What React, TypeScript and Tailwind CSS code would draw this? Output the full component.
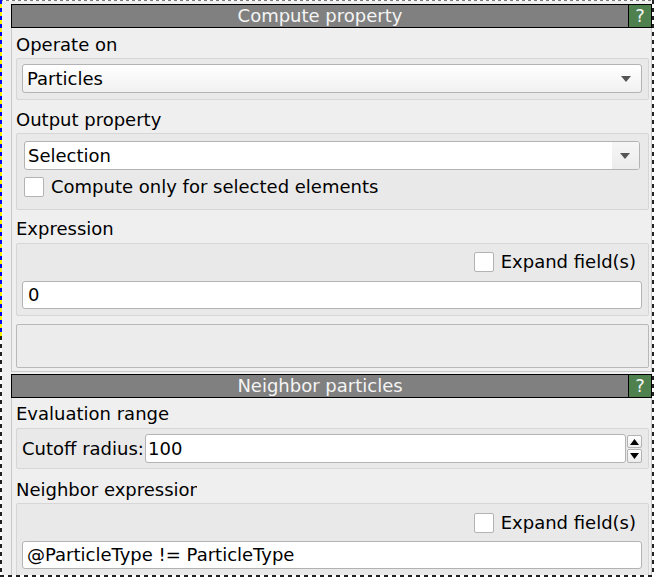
import React from "react";

function Header({ title }: { title: string }) {
  return (
    <div className="flex h-[24px] border border-black bg-[#808080]">
      <div className="flex flex-1 items-center justify-center text-[18px] leading-[20px] text-[#f4f4f4]">{title}</div>
      <div className="flex w-[23px] items-center justify-center border-l border-black bg-[#4e814e] text-[18px] leading-[20px] text-[#f4f4f4]">?</div>
    </div>
  );
}

function Tri({ color = "#555" }: { color?: string }) {
  return (
    <svg width="10" height="6" viewBox="0 0 10 6">
      <polygon points="0,0 10,0 5,6" fill={color} />
    </svg>
  );
}

function Checkbox() {
  return <div className="h-[20px] w-[20px] shrink-0 rounded-[2px] border border-[#b3b3b3] bg-white" />;
}

function Box({ className, children }: { className: string; children?: React.ReactNode }) {
  return <div className={`rounded-[2px] border border-[#d6d6d6] bg-[#e9e9e9] ${className}`}>{children}</div>;
}

export default function App() {
  return (
    <div className="relative h-[577px] w-[654px] overflow-hidden bg-[#efefef] pl-[11px] pr-[2px] pt-[4px] font-['DejaVu_Sans',sans-serif] text-[18px] leading-[20px] text-black">
      <Header title="Compute property" />
      <div className="border-x border-b border-[#c9c9c9] pl-[4px] pr-[2px] pb-[3px]">
        <div className="h-[30px] pt-[7px]">Operate on</div>
        <Box className="h-[42px] pl-[5px] pr-[6px] pt-[5px]">
          <div className="flex h-[29px] items-center rounded-[3px] border border-[#b3b3b3] bg-gradient-to-b from-white to-[#f1f1f1] pl-[4px] pr-[10px]">
            <span className="flex-1">Particles</span>
            <Tri />
          </div>
        </Box>
        <div className="h-[33px] pt-[10px]">Output property</div>
        <Box className="h-[77px] pl-[7px] pr-[8px] pt-[7px]">
          <div className="flex h-[29px] items-stretch overflow-hidden rounded-[3px] border border-[#b3b3b3] bg-white">
            <span className="flex flex-1 items-center pl-[3px]">Selection</span>
            <div className="flex w-[27px] items-center justify-center bg-gradient-to-b from-[#f6f6f6] to-[#ececec] pr-[1px]">
              <Tri />
            </div>
          </div>
          <div className="mt-[7px] flex h-[20px] items-center gap-[7px]">
            <Checkbox />
            <span>Compute only for selected elements</span>
          </div>
        </Box>
        <div className="h-[33px] pt-[9px]">Expression</div>
        <Box className="h-[73px] pl-[5px] pr-[6px] pt-[8px]">
          <div className="flex h-[20px] items-center justify-end gap-[7px] pr-[6px]">
            <Checkbox />
            <span>Expand field(s)</span>
          </div>
          <div className="mt-[9px] flex h-[28px] items-center rounded-[3px] border border-[#b3b3b3] bg-white pl-[5px]">0</div>
        </Box>
        <div className="mt-[8px] h-[44px] rounded-[2px] border border-[#b9b9b9] bg-[#ececec]" />
      </div>
      <div className="mt-[2px]">
        <Header title="Neighbor particles" />
      </div>
      <div className="border-x border-[#c9c9c9] pl-[4px] pr-[2px]">
        <div className="h-[30px] pt-[6px]">Evaluation range</div>
        <Box className="h-[41px] pl-[5px] pr-[6px] pt-[5px]">
          <div className="flex h-[29px] items-center">
            <span className="w-[123px] shrink-0 whitespace-nowrap">Cutoff radius:</span>
            <div className="flex h-[29px] flex-1 items-center rounded-[3px] border border-[#b3b3b3] bg-white pl-[2px]">100</div>
            <div className="ml-[1px] flex w-[15px] flex-col gap-[1px] pt-[1px]">
              <div className="flex h-[13px] items-center justify-center rounded-[2px] border border-[#b3b3b3] bg-gradient-to-b from-white to-[#ececec]">
                <svg width="9" height="6" viewBox="0 0 9 6"><polygon points="0,6 9,6 4.5,0" fill="#000" /></svg>
              </div>
              <div className="flex h-[14px] items-center justify-center rounded-[2px] border border-[#b3b3b3] bg-gradient-to-b from-white to-[#ececec]">
                <svg width="9" height="6" viewBox="0 0 9 6"><polygon points="0,0 9,0 4.5,6" fill="#000" /></svg>
              </div>
            </div>
          </div>
        </Box>
        <div className="h-[34px] pt-[11px]">
          <span className="inline-block w-[181px] overflow-hidden whitespace-nowrap align-top">Neighbor expression</span>
        </div>
        <Box className="h-[80px] pl-[5px] pr-[6px] pt-[9px]">
          <div className="flex h-[20px] items-center justify-end gap-[7px] pr-[6px]">
            <Checkbox />
            <span>Expand field(s)</span>
          </div>
          <div className="mt-[8px] flex h-[28px] items-center rounded-[3px] border border-[#b3b3b3] bg-white pl-[4px]">@ParticleType != ParticleType</div>
        </Box>
      </div>

      {/* selection frame overlays */}
      <div className="absolute left-0 right-0 top-0 h-px bg-[image:repeating-linear-gradient(to_right,#7a7a7a_0px,#7a7a7a_3px,#ffffff_3px,#ffffff_6px)]" />
      <div className="absolute left-0 top-0 h-[336px] w-[2px] bg-[image:repeating-linear-gradient(to_bottom,#0000ff_0px,#0000ff_4px,#ffff00_4px,#ffff00_8px)]" />
      <div className="absolute bottom-0 left-0 top-[336px] w-[2px] bg-[image:repeating-linear-gradient(to_bottom,#222_0px,#222_4px,#ffffff_4px,#ffffff_8px)]" />
      <div className="absolute bottom-0 right-0 top-0 w-[2px] bg-[image:repeating-linear-gradient(to_bottom,#222_0px,#222_4px,#ffffff_4px,#ffffff_8px)]" />
      <div className="absolute bottom-0 left-0 right-0 h-[2px] bg-[image:repeating-linear-gradient(to_right,#222_0px,#222_4px,#ffffff_4px,#ffffff_8px)]" />
    </div>
  );
}
